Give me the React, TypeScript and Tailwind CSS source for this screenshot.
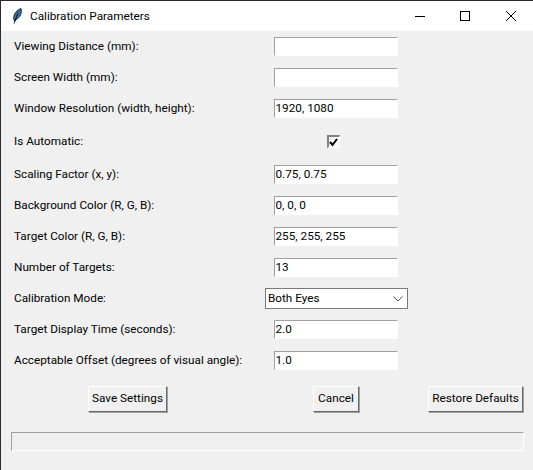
const labelFont = "font-['Roboto',sans-serif] text-[11.75px] text-black";

function Field({ value = '' }: { value?: string }) {
  return (
    <div className="mr-[2px] flex h-[19px] w-[124px] items-center overflow-hidden border border-t-[#a0a0a0] border-l-[#a0a0a0] border-r-white border-b-white bg-white pl-[1px]">
      {value}
    </div>
  );
}

function Row({ label, height = 'h-[31px]', children }: { label: string; height?: string; children: React.ReactNode }) {
  return (
    <div className={`flex items-center ${height}`}>
      <div className="w-[264px] pl-[13px]">{label}</div>
      <div className="flex w-[143px] justify-center">{children}</div>
    </div>
  );
}

function TkButton({ children, className }: { children: React.ReactNode; className: string }) {
  return (
    <button className={`flex h-[26px] items-center justify-center whitespace-nowrap border border-t-white border-l-white border-r-[#696969] border-b-[#696969] bg-[#f0f0f0] shadow-[1px_1px_0_#a0a0a0] ${className}`}>
      {children}
    </button>
  );
}

export default function App() {
  return (
    <div className={`flex h-[470px] w-[533px] flex-col overflow-hidden border-t border-l border-[#2b2b2b] bg-[#f0f0f0] ${labelFont}`}>
      {/* Title bar */}
      <div className="flex h-[30px] shrink-0 items-center bg-white">
        <svg className="ml-[12px] h-[16px] w-[9px]" viewBox="0 0 9 16">
          <path d="M1 12C0 8 2 3 8 .5c1 4-.5 9-5 11L2 13z" fill="#3f6d9c" stroke="#15263a" strokeWidth="1" />
          <path d="M1 15.5 5 5" stroke="#0b1520" strokeWidth="1" />
        </svg>
        <span className="ml-[8px] pt-[1px]">Calibration Parameters</span>
        <div className="ml-auto flex items-center">
          <svg className="mr-[33px] h-[12px] w-[12px]" viewBox="0 0 12 12">
            <path d="M1 6.5h10" stroke="#000" strokeWidth="1" />
          </svg>
          <svg className="mr-[34px] h-[12px] w-[12px]" viewBox="0 0 12 12">
            <rect x="1.5" y="1.5" width="9" height="9" fill="none" stroke="#000" strokeWidth="1" />
          </svg>
          <svg className="mr-[16px] h-[12px] w-[12px]" viewBox="0 0 12 12">
            <path d="M1 1l10 10M11 1 1 11" stroke="#000" strokeWidth="1" />
          </svg>
        </div>
      </div>

      <Row label="Viewing Distance (mm):"><Field /></Row>
      <Row label="Screen Width (mm):"><Field /></Row>
      <Row label="Window Resolution (width, height):"><Field value="1920, 1080" /></Row>
      <Row label="Is Automatic:" height="h-[35px]">
        <div className="mr-[7px] flex h-[13px] w-[13px] items-center justify-center border-t-2 border-l-2 border-r border-b border-t-[#808080] border-l-[#808080] border-r-white border-b-white bg-[#f7f7f7]">
          <svg className="h-[9px] w-[9px]" viewBox="0 0 9 9">
            <path d="M1 4l2.5 3L8 1" fill="none" stroke="#000" strokeWidth="2" />
          </svg>
        </div>
      </Row>
      <Row label="Scaling Factor (x, y):"><Field value="0.75, 0.75" /></Row>
      <Row label="Background Color (R, G, B):"><Field value="0, 0, 0" /></Row>
      <Row label="Target Color (R, G, B):"><Field value="255, 255, 255" /></Row>
      <Row label="Number of Targets:"><Field value="13" /></Row>
      <Row label="Calibration Mode:">
        <div className="flex h-[21px] w-[143px] items-center justify-between border border-[#7a7a7a] bg-white pl-[2px] pr-[4px]">
          Both Eyes
          <svg className="h-[6px] w-[10px]" viewBox="0 0 10 6">
            <path d="M.5.5 5 5 9.5.5" fill="none" stroke="#555" strokeWidth="1" />
          </svg>
        </div>
      </Row>
      <Row label="Target Display Time (seconds):"><Field value="2.0" /></Row>
      <Row label="Acceptable Offset (degrees of visual angle):"><Field value="1.0" /></Row>

      {/* Actions */}
      <div className="mt-[10px] flex pl-[87px]">
        <TkButton className="w-[79px]">Save Settings</TkButton>
        <TkButton className="ml-[146px] w-[46px]">Cancel</TkButton>
        <TkButton className="ml-[69px] w-[95px]">Restore Defaults</TkButton>
      </div>

      {/* Progress bar */}
      <div className="ml-[10px] mt-[20px] h-[19px] w-[513px] border border-t-[#a0a0a0] border-l-[#a0a0a0] border-r-white border-b-white" />
    </div>
  );
}
